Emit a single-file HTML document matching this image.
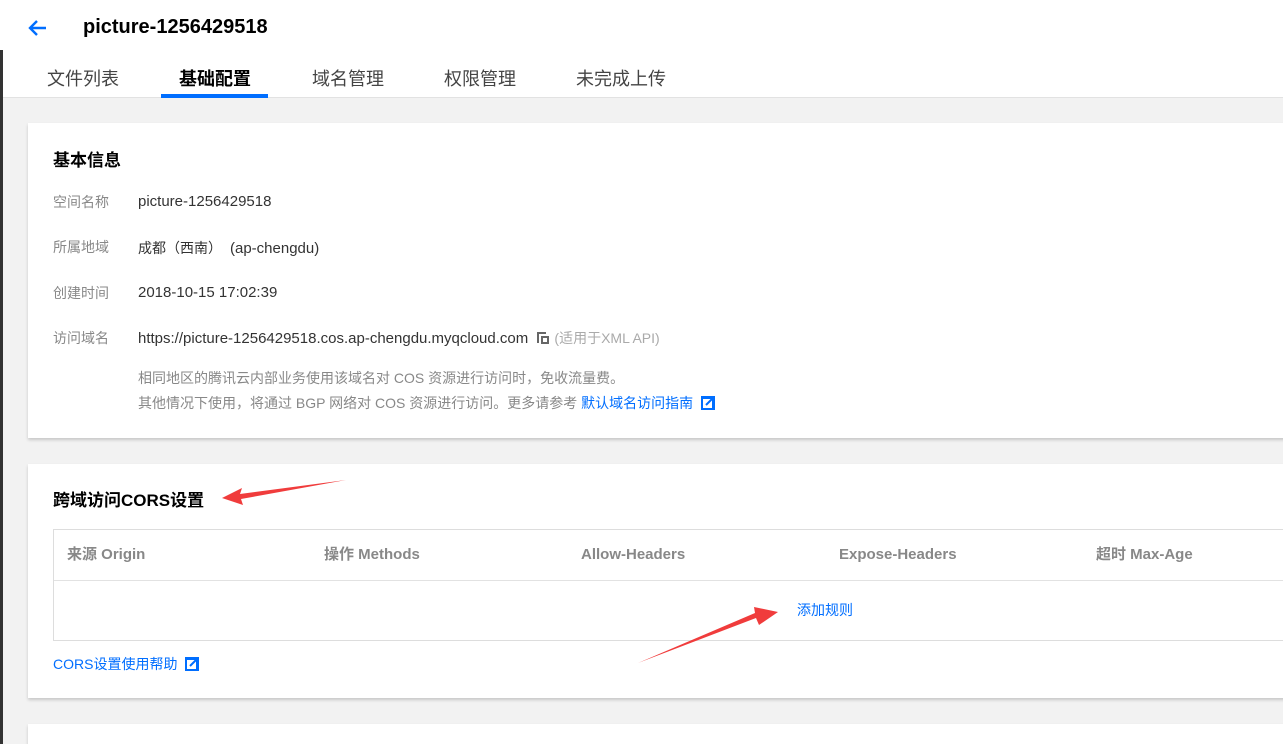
<!DOCTYPE html>
<html><head><meta charset="utf-8"><style>
*{margin:0;padding:0;box-sizing:border-box}
html,body{width:1283px;height:744px;overflow:hidden}
body{background:#f2f2f2;font-family:"Liberation Sans","Noto Sans CJK SC",sans-serif;position:relative;color:#333}
.a{position:absolute;white-space:nowrap}
.hdr{position:absolute;left:0;top:0;width:1283px;height:98px;background:#fff;border-bottom:1px solid #e2e2e2}
.card{position:absolute;left:28px;width:1270px;background:#fff;box-shadow:0 2px 3px rgba(0,0,0,.18)}
.lab{color:#888;font-size:14px}
.val{color:#333;font-size:15px}
.tab{font-size:18px;color:#444}
.th{font-size:15px;color:#888;font-weight:bold}
.blue{color:#006eff}
.ic{display:inline-block;vertical-align:-2px;margin-left:8px}
</style></head><body>
<div class="hdr"></div>
<div class="a" style="left:0;top:50px;width:3px;height:694px;background:#333"></div>
<svg class="a" style="left:26px;top:18px" width="22" height="20" viewBox="0 0 22 20"><path d="M20 10H4M11 3L4 10l7 7" stroke="#006eff" stroke-width="2.4" fill="none"/></svg>
<div class="a" style="left:83px;top:16px;font-size:20px;font-weight:bold;color:#000">picture-1256429518</div>
<div class="a tab" style="left:47px;top:65px">文件列表</div>
<div class="a tab" style="left:179px;top:65px;font-weight:bold;color:#000">基础配置</div>
<div class="a" style="left:161px;top:94px;width:107px;height:4px;background:#006eff"></div>
<div class="a tab" style="left:312px;top:65px">域名管理</div>
<div class="a tab" style="left:444px;top:65px">权限管理</div>
<div class="a tab" style="left:576px;top:65px">未完成上传</div>

<div class="card" style="top:123px;height:315px"></div>
<div class="a" style="left:53px;top:146px;font-size:17px;font-weight:bold;color:#000">基本信息</div>
<div class="a lab" style="left:53px;top:192px">空间名称</div><div class="a val" style="left:138px;top:193px">picture-1256429518</div>
<div class="a lab" style="left:53px;top:237px">所属地域</div><div class="a val" style="left:138px;top:237px"><span style="font-size:14px">成都（西南）</span>　(ap-chengdu)</div>
<div class="a lab" style="left:53px;top:283px">创建时间</div><div class="a val" style="left:138px;top:284px">2018-10-15 17:02:39</div>
<div class="a lab" style="left:53px;top:328px">访问域名</div><div class="a val" style="left:138px;top:328px">https://picture-1256429518.cos.ap-chengdu.myqcloud.com<svg class="ic" width="14" height="14"><path d="M1 1h9v2H3v9H1z" fill="#666"/><rect x="5" y="5" width="8" height="8" fill="#666"/><rect x="7" y="7" width="4" height="4" fill="#fff"/></svg> <span style="color:#aaa;font-size:14px">(适用于XML API)</span></div>
<div class="a lab" style="left:138px;top:368px">相同地区的腾讯云内部业务使用该域名对 COS 资源进行访问时，免收流量费。</div>
<div class="a lab" style="left:138px;top:393px">其他情况下使用，将通过 BGP 网络对 COS 资源进行访问。更多请参考 <span class="blue">默认域名访问指南</span><svg class="ic" width="14" height="14"><rect x="0" y="0" width="14" height="14" fill="#006eff"/><rect x="2" y="3" width="9" height="9" fill="#fff"/><path d="M5 9L11 3M7 2h5v5" stroke="#006eff" stroke-width="2" fill="none"/></svg></div>

<div class="card" style="top:464px;height:234px"></div>
<div class="a" style="left:53px;top:486px;font-size:17px;font-weight:bold;color:#000">跨域访问CORS设置</div>
<div class="a" style="left:53px;top:529px;width:1240px;height:112px;border:1px solid #ddd"></div>
<div class="a" style="left:54px;top:580px;width:1240px;height:1px;background:#e2e2e2"></div>
<div class="a th" style="left:67px;top:543px">来源 Origin</div>
<div class="a th" style="left:324px;top:543px">操作 Methods</div>
<div class="a th" style="left:581px;top:546px">Allow-Headers</div>
<div class="a th" style="left:839px;top:546px">Expose-Headers</div>
<div class="a th" style="left:1096px;top:543px">超时 Max-Age</div>
<div class="a blue" style="left:797px;top:600px;font-size:14px">添加规则</div>
<div class="a blue" style="left:53px;top:654px;font-size:14px">CORS设置使用帮助<svg class="ic" width="14" height="14"><rect x="0" y="0" width="14" height="14" fill="#006eff"/><rect x="2" y="3" width="9" height="9" fill="#fff"/><path d="M5 9L11 3M7 2h5v5" stroke="#006eff" stroke-width="2" fill="none"/></svg></div>

<div class="card" style="top:724px;height:20px"></div>

<svg class="a" style="left:0;top:0" width="1283" height="744">
<polygon points="346,480 240,494 242,488 222,498 243,505 241,499" fill="#f03c3c"/>
<polygon points="638,663 756,618 759,625 778,612 754,607 755,613" fill="#f03c3c"/>
</svg>
</body></html>
